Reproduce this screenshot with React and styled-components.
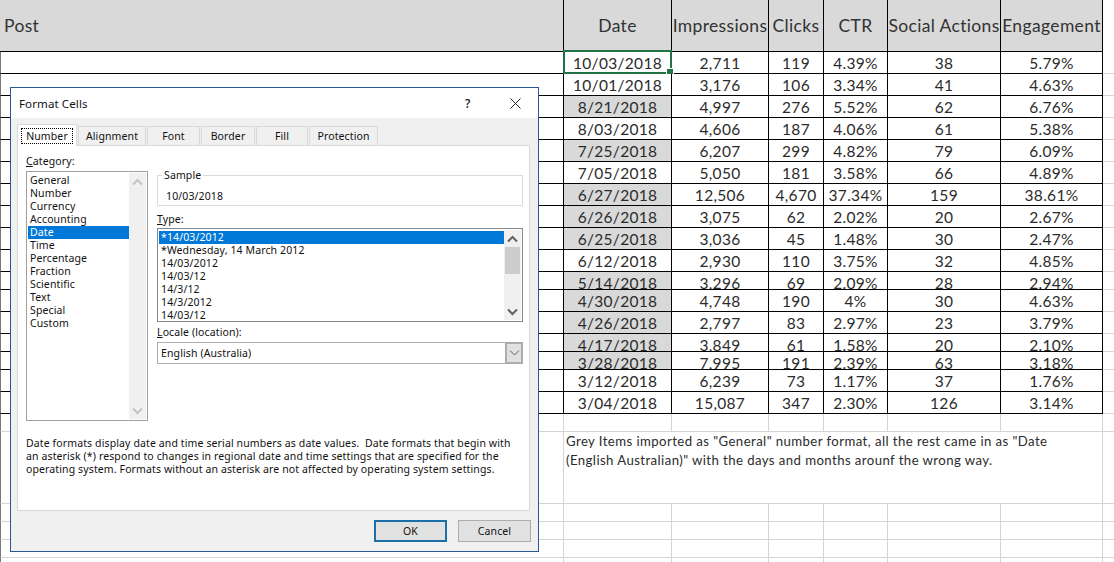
import React from "react";
import styled, { createGlobalStyle } from "styled-components";

const Global = createGlobalStyle`
  html, body { margin: 0; padding: 0; background: #fff; overflow: hidden; }
  * { box-sizing: border-box; }
`;

const COLS = "564px 108px 97px 55px 64px 113px 102px 11px";
const GRID = "#d4d4d4";
const INK = "#000";

const Page = styled.div`
  position: relative;
  width: 1114px;
  height: 562px;
  overflow: hidden;
  font-family: "Lato", "Open Sans", sans-serif;
  color: #2b2b2b;
`;

const Row = styled.div`
  position: relative;
  display: grid;
  grid-template-columns: ${COLS};
  height: ${(p) => p.$h}px;
`;

const HeadCell = styled.div`
  display: flex;
  align-items: center;
  justify-content: ${(p) => (p.$left ? "flex-start" : "center")};
  padding-left: ${(p) => (p.$left ? "4px" : "0")};
  background: #d9d9d9;
  border-right: 1px solid ${INK};
  border-bottom: 1px solid ${INK};
  font-size: 17.5px;
  letter-spacing: 0.35px;
  white-space: nowrap;
  color: #333;
`;

const Cell = styled.div`
  height: 100%;
  overflow: hidden;
  text-align: center;
  font-size: 15.5px;
  line-height: 22px;
  letter-spacing: 0.3px;
  white-space: nowrap;
  background: ${(p) => (p.$grey ? "#d9d9d9" : "#fff")};
  border-right: 1px solid ${INK};
  border-bottom: 1px solid ${INK};
`;

const PostCell = styled(Cell)`
  border-left: 1px solid #777;
`;

const Filler = styled.div`
  border-bottom: 1px solid ${GRID};
`;

const EmptyCell = styled.div`
  border-right: 1px solid ${GRID};
  border-bottom: 1px solid ${GRID};
`;

const EmptyPost = styled(EmptyCell)`
  border-left: 1px solid #777;
`;

const NoteCell = styled.div`
  grid-column: span 6;
  padding: 0 0 0 2px;
  border-right: 1px solid ${GRID};
  border-bottom: 1px solid ${GRID};
  font-size: 13.2px;
  line-height: 18.5px;
  letter-spacing: 0.42px;
  white-space: nowrap;
`;

const Selection = styled.div`
  position: absolute;
  left: 563px;
  top: -2px;
  width: 109px;
  height: 24px;
  border: 2px solid #217346;
  pointer-events: none;
  &::after {
    content: "";
    position: absolute;
    right: -4px;
    bottom: -4px;
    width: 6px;
    height: 6px;
    background: #217346;
    border: 1px solid #fff;
  }
`;

/* Dialog */
const Dialog = styled.div`
  position: absolute;
  left: 10px;
  top: 87px;
  width: 529px;
  height: 465px;
  display: flex;
  flex-direction: column;
  background: #f0f0f0;
  border: 1px solid #2b5797;
  font-family: "Noto Sans", "Open Sans", sans-serif;
  font-size: 10.5px;
  letter-spacing: 0.12px;
  color: #111;
`;

const TitleBar = styled.div`
  height: 30px;
  flex: none;
  display: flex;
  align-items: center;
  padding: 0 17px 0 8px;
  background: #fff;
`;

const Title = styled.div`
  flex: 1;
  font-size: 11.5px;
`;

const Help = styled.div`
  width: 45px;
  font-size: 12px;
  font-weight: 500;
`;

const TabBar = styled.div`
  height: 28px;
  flex: none;
  display: flex;
  align-items: flex-end;
  gap: 1px;
  padding-left: 6px;
  margin-bottom: -1px;
  position: relative;
  z-index: 1;
`;

const Tab = styled.div`
  width: ${(p) => p.$w}px;
  height: ${(p) => (p.$active ? 22 : 20)}px;
  display: flex;
  align-items: center;
  justify-content: center;
  background: ${(p) => (p.$active ? "#fff" : "#f0f0f0")};
  border: 1px solid #d9d9d9;
  border-bottom: ${(p) => (p.$active ? "none" : "1px solid #d9d9d9")};
`;

const TabFocus = styled.span`
  padding: 0 4px;
  line-height: 14px;
  border: 1px dotted #000;
`;

const Panel = styled.div`
  width: 513px;
  height: 366px;
  margin-left: 6px;
  flex: none;
  display: flex;
  flex-direction: column;
  padding: 8px 8px 0 8px;
  background: #fff;
  border: 1px solid #d9d9d9;
`;

const Columns = styled.div`
  display: flex;
  gap: 9px;
`;

const LeftCol = styled.div`
  width: 122px;
  flex: none;
`;

const RightCol = styled.div`
  width: 366px;
  flex: none;
  padding-top: 21px;
`;

const FieldLabel = styled.div`
  height: ${(p) => p.$h || 16}px;
  margin-top: ${(p) => p.$mt || 0}px;
  line-height: 14px;
  u { text-underline-offset: 1px; }
`;

const ListFrame = styled.div`
  display: flex;
  height: ${(p) => p.$h}px;
  padding: 1px;
  background: #fff;
  border: 1px solid ${(p) => p.$border};
`;

const ListBody = styled.div`
  flex: 1;
  min-width: 0;
  padding-top: 1px;
  overflow: hidden;
`;

const ListItem = styled.div`
  height: 13px;
  line-height: 13px;
  padding-left: ${(p) => p.$pad}px;
  background: ${(p) => (p.$on ? "#0078d7" : "transparent")};
  color: ${(p) => (p.$on ? "#fff" : "#111")};
  white-space: nowrap;
`;

const Scrollbar = styled.div`
  width: 17px;
  flex: none;
  display: flex;
  flex-direction: column;
  align-items: center;
  justify-content: space-between;
  background: #f0f0f0;
  position: relative;
`;

const ScrollBtn = styled.div`
  height: 17px;
  display: flex;
  align-items: center;
  justify-content: center;
`;

const Thumb = styled.div`
  position: absolute;
  top: 17px;
  left: 1px;
  width: 15px;
  height: 27px;
  background: #cdcdcd;
`;

const SampleBox = styled.div`
  position: relative;
  height: 31px;
  padding: 13px 0 0 8px;
  border: 1px solid #dcdcdc;
  line-height: 14px;
`;

const Legend = styled.span`
  position: absolute;
  left: 4px;
  top: -7px;
  padding: 0 2px;
  line-height: 13px;
  background: #fff;
`;

const Combo = styled.div`
  display: flex;
  height: 22px;
  align-items: stretch;
  border: 1px solid #adadad;
`;

const ComboText = styled.div`
  flex: 1;
  padding-left: 3px;
  line-height: 20px;
`;

const ComboBtn = styled.div`
  width: 18px;
  display: flex;
  align-items: center;
  justify-content: center;
  background: #e1e1e1;
  border: 2px solid #adadad;
  margin: -1px;
`;

const Description = styled.div`
  margin-top: 16px;
  line-height: 13px;
  white-space: nowrap;
`;

const Footer = styled.div`
  flex: 1;
  display: flex;
  justify-content: flex-end;
  align-items: flex-start;
  gap: 11px;
  padding: 9px 7px 0 0;
`;

const Button = styled.div`
  width: 73px;
  height: 22px;
  display: flex;
  align-items: center;
  justify-content: center;
  background: #e1e1e1;
  border: ${(p) => (p.$primary ? "2px solid #1d6fa8" : "1px solid #adadad")};
`;

const Chevron = ({ up, color = "#606060", w = 2 }) => (
  <svg width="11" height="8" viewBox="0 0 11 8">
    <polyline
      points={up ? "1,6.5 5.5,2 10,6.5" : "1,1.5 5.5,6 10,1.5"}
      fill="none"
      stroke={color}
      strokeWidth={w}
    />
  </svg>
);

const CloseIcon = () => (
  <svg width="11" height="11" viewBox="0 0 11 11">
    <path d="M0.5 0.5L10.5 10.5M10.5 0.5L0.5 10.5" stroke="#222" strokeWidth="1" fill="none" />
  </svg>
);

const data = [
  ["10/03/2018", "2,711", "119", "4.39%", "38", "5.79%", 22, 0],
  ["10/01/2018", "3,176", "106", "3.34%", "41", "4.63%", 22, 0],
  ["8/21/2018", "4,997", "276", "5.52%", "62", "6.76%", 22, 1],
  ["8/03/2018", "4,606", "187", "4.06%", "61", "5.38%", 22, 0],
  ["7/25/2018", "6,207", "299", "4.82%", "79", "6.09%", 22, 1],
  ["7/05/2018", "5,050", "181", "3.58%", "66", "4.89%", 22, 0],
  ["6/27/2018", "12,506", "4,670", "37.34%", "159", "38.61%", 22, 1],
  ["6/26/2018", "3,075", "62", "2.02%", "20", "2.67%", 22, 1],
  ["6/25/2018", "3,036", "45", "1.48%", "30", "2.47%", 22, 1],
  ["6/12/2018", "2,930", "110", "3.75%", "32", "4.85%", 22, 0],
  ["5/14/2018", "3,296", "69", "2.09%", "28", "2.94%", 18, 1],
  ["4/30/2018", "4,748", "190", "4%", "30", "4.63%", 22, 1],
  ["4/26/2018", "2,797", "83", "2.97%", "23", "3.79%", 22, 1],
  ["4/17/2018", "3,849", "61", "1.58%", "20", "2.10%", 18, 1],
  ["3/28/2018", "7,995", "191", "2.39%", "63", "3.18%", 18, 1],
  ["3/12/2018", "6,239", "73", "1.17%", "37", "1.76%", 22, 0],
  ["3/04/2018", "15,087", "347", "2.30%", "126", "3.14%", 22, 0],
];

const heads = ["Date", "Impressions", "Clicks", "CTR", "Social Actions", "Engagement"];
const categories = ["General", "Number", "Currency", "Accounting", "Date", "Time", "Percentage", "Fraction", "Scientific", "Text", "Special", "Custom"];
const types = ["*14/03/2012", "*Wednesday, 14 March 2012", "14/03/2012", "14/03/12", "14/3/12", "14/3/2012", "14/03/12"];
const tabs = [["Number", 60], ["Alignment", 68], ["Font", 53], ["Border", 54], ["Fill", 52], ["Protection", 69]];

const BlankRow = ({ h }) => (
  <Row $h={h}>
    <EmptyPost />
    {[0, 1, 2, 3, 4, 5].map((i) => <EmptyCell key={i} />)}
    <Filler />
  </Row>
);

export default function App() {
  return (
    <Page>
      <Global />
      <Row $h={52}>
        <HeadCell $left>Post</HeadCell>
        {heads.map((h) => <HeadCell key={h}>{h}</HeadCell>)}
        <div />
      </Row>
      {data.map((r, i) => (
        <Row $h={r[6]} key={r[0]}>
          <PostCell />
          <Cell $grey={r[7] === 1}>{r[0]}</Cell>
          {r.slice(1, 6).map((v, j) => <Cell key={j}>{v}</Cell>)}
          <Filler />
          {i === 0 && <Selection />}
        </Row>
      ))}
      <BlankRow h={18} />
      <Row $h={72}>
        <EmptyPost />
        <NoteCell>
          Grey Items imported as "General" number format, all the rest came in as "Date
          <br />
          (English Australian)" with the days and months arounf the wrong way.
        </NoteCell>
        <Filler />
      </Row>
      <BlankRow h={18} />
      <BlankRow h={18} />
      <BlankRow h={18} />
      <BlankRow h={18} />

      <Dialog>
        <TitleBar>
          <Title>Format Cells</Title>
          <Help>?</Help>
          <CloseIcon />
        </TitleBar>
        <TabBar>
          {tabs.map(([t, w], i) => (
            <Tab key={t} $w={w} $active={i === 0}>
              {i === 0 ? <TabFocus>{t}</TabFocus> : t}
            </Tab>
          ))}
        </TabBar>
        <Panel>
          <Columns>
            <LeftCol>
              <FieldLabel $h={17}><u>C</u>ategory:</FieldLabel>
              <ListFrame $h={250} $border="#a0a0a0">
                <ListBody>
                  {categories.map((c) => (
                    <ListItem key={c} $pad={2} $on={c === "Date"}>{c}</ListItem>
                  ))}
                </ListBody>
                <Scrollbar>
                  <ScrollBtn><Chevron up color="#c4c4c4" /></ScrollBtn>
                  <ScrollBtn><Chevron color="#c4c4c4" /></ScrollBtn>
                </Scrollbar>
              </ListFrame>
            </LeftCol>
            <RightCol>
              <SampleBox>
                <Legend>Sample</Legend>
                10/03/2018
              </SampleBox>
              <FieldLabel $mt={6}><u>T</u>ype:</FieldLabel>
              <ListFrame $h={94} $border="#828790">
                <ListBody>
                  {types.map((t, i) => (
                    <ListItem key={i} $pad={2} $on={i === 0}>{t}</ListItem>
                  ))}
                </ListBody>
                <Scrollbar>
                  <ScrollBtn><Chevron up /></ScrollBtn>
                  <Thumb />
                  <ScrollBtn><Chevron /></ScrollBtn>
                </Scrollbar>
              </ListFrame>
              <FieldLabel $mt={3} $h={17}><u>L</u>ocale (location):</FieldLabel>
              <Combo>
                <ComboText>English (Australia)</ComboText>
                <ComboBtn><Chevron w={1} /></ComboBtn>
              </Combo>
            </RightCol>
          </Columns>
          <Description>
            Date formats display date and time serial numbers as date values.&nbsp; Date formats that begin with
            <br />
            an asterisk (*) respond to changes in regional date and time settings that are specified for the
            <br />
            operating system. Formats without an asterisk are not affected by operating system settings.
          </Description>
        </Panel>
        <Footer>
          <Button $primary>OK</Button>
          <Button>Cancel</Button>
        </Footer>
      </Dialog>
    </Page>
  );
}
